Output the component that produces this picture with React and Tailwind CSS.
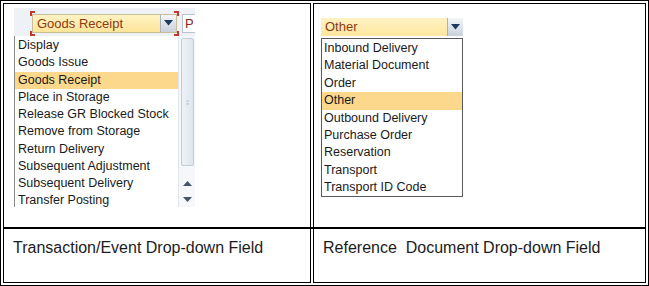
import { useState } from "react";

const leftItems = [
  "Display",
  "Goods Issue",
  "Goods Receipt",
  "Place in Storage",
  "Release GR Blocked Stock",
  "Remove from Storage",
  "Return Delivery",
  "Subsequent Adjustment",
  "Subsequent Delivery",
  "Transfer Posting",
];

const rightItems = [
  "Inbound Delivery",
  "Material Document",
  "Order",
  "Other",
  "Outbound Delivery",
  "Purchase Order",
  "Reservation",
  "Transport",
  "Transport ID Code",
];

function DropButton() {
  return (
    <div className="w-[16px] h-full flex items-center justify-center border-l border-[#a9b3c0] bg-gradient-to-b from-[#f4f6f9] to-[#c9d1dc]">
      <svg width="9" height="6" viewBox="0 0 9 6">
        <path d="M0 0 H9 L4.5 5.5 Z" fill="#1f3a5f" />
      </svg>
    </div>
  );
}

function Corner({ pos }) {
  return <span className={`absolute w-[5px] h-[5px] border-[#c0392b] ${pos}`} />;
}

function TransactionList() {
  const [selected] = useState("Goods Receipt");

  return (
    <div className="w-[181px] font-['Liberation_Sans',sans-serif] text-[12.5px] text-[#1a1a1a]">

      {/* ================= HEADER STRIP ================= */}

      <div className="h-[28px] bg-[#eef2f6] flex items-center pl-[18px] pt-[2px]">
        <div className="relative">
          <Corner pos="-left-[2px] -top-[3px] border-l-2 border-t-2" />
          <Corner pos="-right-[2px] -top-[3px] border-r-2 border-t-2" />
          <Corner pos="-left-[2px] -bottom-[3px] border-l-2 border-b-2" />
          <Corner pos="-right-[2px] -bottom-[3px] border-r-2 border-b-2" />
          <div className="w-[145px] h-[19px] flex border border-[#c8bd96] bg-gradient-to-b from-[#fff3c4] to-[#fde49a]">
            <span className="flex-1 pl-[4px] leading-[18px] text-[#8a3b12] text-[13px]">
              {selected}
            </span>
            <DropButton />
          </div>
        </div>
        <div className="ml-[5px] w-[14px] h-[19px] bg-white border border-[#b9c2cd] border-r-0 text-[#8a2a1a] text-[13px] leading-[18px] pl-[2px] overflow-hidden">
          P
        </div>
      </div>

      {/* ================= LIST ================= */}

      <div className="flex h-[171px] overflow-hidden">
        <div className="w-[164px] bg-white border-l border-[#8a8a8a] pt-[1px]">
          {leftItems.map((item) => (
            <div
              key={item}
              className={`h-[17.25px] leading-[17px] pl-[3px] whitespace-nowrap ${
                item === selected ? "bg-[#fbd88c]" : ""
              }`}
            >
              {item}
            </div>
          ))}
        </div>
        <div className="w-[17px] bg-[#f5f7fa] flex flex-col items-center border-l border-[#e1e6ec]">
          <div className="mt-[2px] w-[13px] h-[138px] rounded-[2px] border border-[#c3ccd7] bg-gradient-to-r from-[#eef2f7] to-[#dfe6ee] flex items-center justify-center">
            <span className="text-[7px] leading-[7px] text-[#aab4bf] tracking-[-1px]">⁞⁞</span>
          </div>
          <div className="mt-[9px] h-[17px] flex items-center">
            <svg width="9" height="5" viewBox="0 0 9 5">
              <path d="M0 5 H9 L4.5 0 Z" fill="#44546a" />
            </svg>
          </div>
          <div className="h-[17px] flex items-center">
            <svg width="9" height="5" viewBox="0 0 9 5">
              <path d="M0 0 H9 L4.5 5 Z" fill="#44546a" />
            </svg>
          </div>
        </div>
      </div>

    </div>
  );
}

function ReferenceList() {
  const selected = "Other";

  return (
    <div className="w-[142px] font-['Liberation_Sans',sans-serif] text-[12.5px] text-[#1a1a1a]">

      <div className="h-[18px] flex bg-gradient-to-b from-[#fff2c2] to-[#fde6a0]">
        <span className="flex-1 pl-[4px] leading-[18px] text-[#8a3b12] text-[13px]">
          {selected}
        </span>
        <DropButton />
      </div>

      <div className="mt-[2px] h-[159px] bg-white border border-[#5a5a5a] pt-[1px]">
        {rightItems.map((item) => (
          <div
            key={item}
            className={`h-[17.4px] leading-[17px] pl-[2px] whitespace-nowrap ${
              item === selected ? "bg-[#fbd88c]" : ""
            }`}
          >
            {item}
          </div>
        ))}
      </div>

    </div>
  );
}

function App() {
  return (
    <div className="w-[649px] h-[286px] bg-white border border-black p-[2px]">

      <div className="flex flex-col h-full">

        {/* ================= PICTURE ROW ================= */}

        <div className="flex h-[224px]">
          <div className="w-[308px] border border-b-0 border-black pl-[10px] pt-[4px]">
            <TransactionList />
          </div>
          <div className="w-[2px]" />
          <div className="flex-1 border border-b-0 border-black pl-[7px] pt-[14px]">
            <ReferenceList />
          </div>
        </div>

        <div className="h-[2px] bg-black" />

        {/* ================= CAPTION ROW ================= */}

        <div className="flex flex-1 font-['Liberation_Sans',sans-serif] text-[16px] text-[#1c1c1c] whitespace-pre">
          <div className="w-[308px] border border-t-0 border-black pl-[9px] pt-[7px]">
            Transaction/Event Drop-down Field
          </div>
          <div className="w-[2px]" />
          <div className="flex-1 border border-t-0 border-black pl-[9px] pt-[7px]">
            Reference  Document Drop-down Field
          </div>
        </div>

      </div>

    </div>
  );
}

export default App;
